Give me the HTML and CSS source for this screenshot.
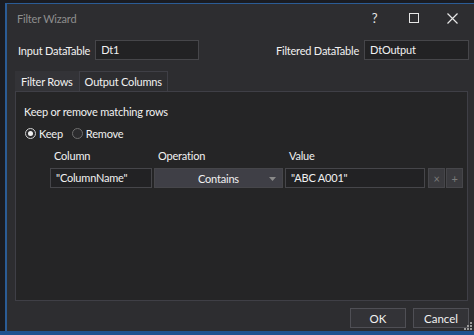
FILE: index.html
```html
<!DOCTYPE html>
<html lang="en">
<head>
    <meta charset="UTF-8">
    <title>Filter Wizard</title>
    <link rel="stylesheet" href="styles.css">
</head>
<body>
    <div class="desktop">
        <div class="window">
            <div class="titlebar">
                <div class="title">Filter Wizard</div>
                <div class="controls">
                    <span class="ctl help">?</span>
                    <span class="ctl max"><span class="box"></span></span>
                    <span class="ctl close">
                        <svg width="11" height="11" viewBox="0 0 11 11"><path d="M0.5 0.5L10.5 10.5M10.5 0.5L0.5 10.5" stroke="#e6e6e6" stroke-width="1.2"/></svg>
                    </span>
                </div>
            </div>

            <div class="tables">
                <div class="field">
                    <label>Input DataTable</label>
                    <div class="input in-table">Dt1</div>
                </div>
                <div class="field">
                    <label>Filtered DataTable</label>
                    <div class="input out-table">DtOutput</div>
                </div>
            </div>

            <div class="tabs">
                <div class="tab active">Filter Rows</div>
                <div class="tab">Output Columns</div>
            </div>

            <div class="panel">
                <div class="heading">Keep or remove matching rows</div>
                <div class="radios">
                    <span class="radio checked"></span><span class="radio-label">Keep</span>
                    <span class="radio"></span><span class="radio-label">Remove</span>
                </div>
                <div class="grid">
                    <div class="col-head">Column</div>
                    <div class="col-head">Operation</div>
                    <div class="col-head">Value</div>
                    <div></div>

                    <div class="input cell">"ColumnName"</div>
                    <div class="select">
                        <span>Contains</span>
                        <svg class="arrow" width="7" height="4" viewBox="0 0 7 4"><path d="M0 0H7L3.5 4Z" fill="#8a8a8a"/></svg>
                    </div>
                    <div class="input cell">"ABC A001"</div>
                    <div class="row-btns">
                        <span class="mini">×</span>
                        <span class="mini">+</span>
                    </div>
                </div>
            </div>

            <div class="footer">
                <button class="btn ok">OK</button>
                <button class="btn">Cancel</button>
                <svg class="grip" width="8" height="8" viewBox="0 0 8 8">
                    <rect x="6" y="0" width="2" height="2" fill="#9a9a9a"/>
                    <rect x="3" y="3" width="2" height="2" fill="#9a9a9a"/>
                    <rect x="6" y="3" width="2" height="2" fill="#9a9a9a"/>
                    <rect x="0" y="6" width="2" height="2" fill="#9a9a9a"/>
                    <rect x="3" y="6" width="2" height="2" fill="#9a9a9a"/>
                    <rect x="6" y="6" width="2" height="2" fill="#9a9a9a"/>
                </svg>
            </div>
        </div>
        <div class="taskbar"></div>
    </div>
</body>
</html>
```

FILE: styles.css
```css
* {
    margin: 0;
    padding: 0;
    box-sizing: border-box;
}

body {
    font-family: 'Lato', 'Open Sans', sans-serif;
    font-size: 11px;
    letter-spacing: -0.2px;
    color: #f1f1f1;
    background: #1a1c22;
    width: 474px;
    height: 335px;
    overflow: hidden;
}

.desktop {
    height: 335px;
    display: flex;
    flex-direction: column;
    padding: 3px 0 0 5px;
}

.window {
    flex: 1;
    display: flex;
    flex-direction: column;
    background: #2d2d30;
    border-top: 1px solid #2b5c96;
    border-left: 2px solid #2b5c96;
    position: relative;
}

.taskbar {
    height: 4px;
    margin-left: -5px;
    background: #1f528f;
}

.titlebar {
    height: 28px;
    display: flex;
    align-items: center;
    justify-content: space-between;
    padding-left: 10px;
    padding-right: 2px;
}

.title {
    color: #8e8e8e;
}

.controls {
    display: flex;
    align-items: center;
}

.ctl {
    width: 39px;
    display: flex;
    justify-content: center;
    align-items: center;
    color: #e6e6e6;
}

.help {
    font-size: 13px;
}

.box {
    width: 10px;
    height: 10px;
    border: 1px solid #e6e6e6;
}

.tables {
    display: flex;
    justify-content: space-between;
    padding: 8px 5px 0 11px;
}

.field {
    display: flex;
    align-items: center;
    gap: 5px;
}

.input {
    height: 20px;
    background: #222224;
    border: 1px solid #46464a;
    padding: 0 5px;
    line-height: 18px;
}

.in-table {
    width: 104px;
}

.out-table {
    width: 105px;
}

.tabs {
    display: flex;
    padding: 11px 0 0 8px;
}

.tab {
    height: 20px;
    padding: 0 5px;
    line-height: 19px;
    border: 1px solid #3f3f46;
    border-bottom: none;
    background: #2d2d30;
}

.tab.active {
    background: #333337;
    border-color: #333337;
}

.panel {
    margin: 0 6px 0 8px;
    height: 210px;
    background: #252526;
    border: 1px solid #3f3f46;
    padding: 12px 0 0 8px;
}

.heading {
    height: 16px;
    line-height: 16px;
}

.radios {
    display: flex;
    align-items: center;
    height: 20px;
    margin-top: 3px;
    padding-left: 1px;
}

.radio {
    width: 11px;
    height: 11px;
    border-radius: 50%;
    border: 1px solid #6e6e6e;
    background: #2b2b2d;
    display: flex;
    align-items: center;
    justify-content: center;
}

.radio.checked {
    border-color: #cfcfcf;
}

.radio.checked::after {
    content: '';
    width: 5px;
    height: 5px;
    border-radius: 50%;
    background: #f1f1f1;
}

.radio-label {
    margin: 0 9px 0 3px;
}

.grid {
    display: grid;
    grid-template-columns: 102px 129px 140px 36px;
    column-gap: 2px;
    margin: 5px 0 0 26px;
}

.col-head {
    height: 16px;
    line-height: 16px;
    padding-left: 4px;
}

.cell {
    margin-top: 4px;
}

.select {
    margin-top: 4px;
    height: 20px;
    background: #3f3f46;
    border: 1px solid #46464a;
    display: flex;
    align-items: center;
    justify-content: center;
    position: relative;
}

.arrow {
    position: absolute;
    right: 6px;
    top: 8px;
}

.row-btns {
    margin-top: 4px;
    display: flex;
    gap: 1px;
    padding-left: 1px;
}

.mini {
    width: 17px;
    height: 20px;
    background: #3a3a3e;
    border: 1px solid #46464a;
    color: #7a7a7a;
    display: flex;
    align-items: center;
    justify-content: center;
}

.footer {
    display: flex;
    justify-content: flex-end;
    gap: 7px;
    padding: 7px 5px 0 0;
    position: relative;
}

.btn {
    font-family: 'Lato', 'Open Sans', sans-serif;
    font-size: 11.5px;
    color: #f1f1f1;
    width: 56px;
    height: 20px;
    background: #333337;
    border: 1px solid #4f4f55;
}

.grip {
    position: absolute;
    right: 2px;
    bottom: -2px;
}
```
